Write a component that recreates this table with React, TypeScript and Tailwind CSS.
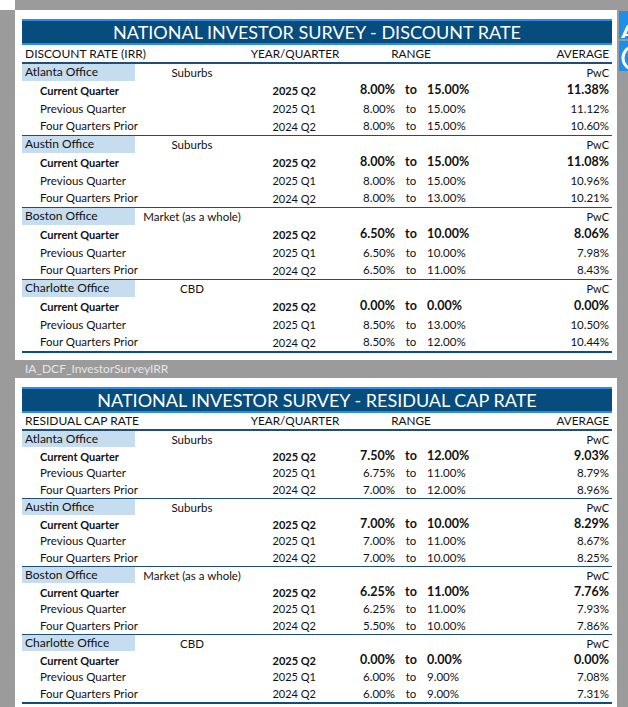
type Row = { label: string; year: string; lo: string; hi: string; avg: string; bold?: boolean };
type Group = { office: string; sub: string; rows: Row[] };

const mk = (vals: string[][]): Row[] => [
  { label: "Current Quarter", year: "2025 Q2", lo: vals[0][0], hi: vals[0][1], avg: vals[0][2], bold: true },
  { label: "Previous Quarter", year: "2025 Q1", lo: vals[1][0], hi: vals[1][1], avg: vals[1][2] },
  { label: "Four Quarters Prior", year: "2024 Q2", lo: vals[2][0], hi: vals[2][1], avg: vals[2][2] },
];

const discount: Group[] = [
  { office: "Atlanta Office", sub: "Suburbs", rows: mk([["8.00%", "15.00%", "11.38%"], ["8.00%", "15.00%", "11.12%"], ["8.00%", "15.00%", "10.60%"]]) },
  { office: "Austin Office", sub: "Suburbs", rows: mk([["8.00%", "15.00%", "11.08%"], ["8.00%", "15.00%", "10.96%"], ["8.00%", "13.00%", "10.21%"]]) },
  { office: "Boston Office", sub: "Market (as a whole)", rows: mk([["6.50%", "10.00%", "8.06%"], ["6.50%", "10.00%", "7.98%"], ["6.50%", "11.00%", "8.43%"]]) },
  { office: "Charlotte Office", sub: "CBD", rows: mk([["0.00%", "0.00%", "0.00%"], ["8.50%", "13.00%", "10.50%"], ["8.50%", "12.00%", "10.44%"]]) },
];

const residual: Group[] = [
  { office: "Atlanta Office", sub: "Suburbs", rows: mk([["7.50%", "12.00%", "9.03%"], ["6.75%", "11.00%", "8.79%"], ["7.00%", "12.00%", "8.96%"]]) },
  { office: "Austin Office", sub: "Suburbs", rows: mk([["7.00%", "10.00%", "8.29%"], ["7.00%", "11.00%", "8.67%"], ["7.00%", "10.00%", "8.25%"]]) },
  { office: "Boston Office", sub: "Market (as a whole)", rows: mk([["6.25%", "11.00%", "7.76%"], ["6.25%", "11.00%", "7.93%"], ["5.50%", "10.00%", "7.86%"]]) },
  { office: "Charlotte Office", sub: "CBD", rows: mk([["0.00%", "0.00%", "0.00%"], ["6.00%", "9.00%", "7.08%"], ["6.00%", "9.00%", "7.31%"]]) },
];

// columns: label | sub | year | low | to | high | average | pad
const grid = "grid grid-cols-[130px_80px_84px_79px_32px_75px_107px_3px] items-center flex-1 min-h-0 leading-none";

function OfficeRow({ g }: { g: Group }) {
  return (
    <div className={grid}>
      <div className="self-stretch mb-[1px] w-[113px] bg-[#c6dcef] pl-[3px] flex items-center text-[12px]">{g.office}</div>
      <div className="flex justify-center whitespace-nowrap text-[11.5px]">{g.sub}</div>
      <div />
      <div />
      <div />
      <div />
      <div className="text-right text-[11px]">PwC</div>
    </div>
  );
}

function DataRow({ r }: { r: Row }) {
  const num = r.bold ? "font-bold text-[12.5px]" : "text-[11.5px]";
  return (
    <div className={grid}>
      <div className={`pl-[18px] whitespace-nowrap ${r.bold ? "font-bold text-[11px]" : "text-[11.5px]"}`}>{r.label}</div>
      <div />
      <div className={`text-right text-[11px] ${r.bold ? "font-bold" : ""}`}>{r.year}</div>
      <div className={`text-right ${num}`}>{r.lo}</div>
      <div className={`text-center ${num}`}>to</div>
      <div className={num}>{r.hi}</div>
      <div className={`text-right ${num}`}>{r.avg}</div>
    </div>
  );
}

function Panel({
  title,
  label,
  groups,
  headH,
  groupH,
  lastH,
  outer,
}: {
  title: string;
  label: string;
  groups: Group[];
  headH: string;
  groupH: string;
  lastH: string;
  outer: string;
}) {
  return (
    <div className={`bg-white pl-[7px] pr-[5px] pt-[9px] ${outer}`}>
      <div className="h-[26px] bg-[#064c7d] border-y-2 border-[#2b8de3] flex items-center justify-center text-white text-[18px] leading-none">
        {title}
      </div>
      <div className={`${headH} border-b-2 border-[#1f4e79] flex items-center text-[11.75px] leading-none`}>
        <div className="w-[211px] pl-[3px] text-[12px] whitespace-nowrap">{label}</div>
        <div className="w-[124px] text-center">YEAR/QUARTER</div>
        <div className="w-[108px] text-center">RANGE</div>
        <div className="w-[144px] text-right">AVERAGE</div>
      </div>
      {groups.map((g, i) => (
        <div
          key={g.office}
          className={`flex flex-col ${i === groups.length - 1 ? `${lastH} border-b-2 border-[#0b4f80]` : `${groupH} border-b border-[#1f4e79]`}`}
        >
          <OfficeRow g={g} />
          {g.rows.map((r) => (
            <DataRow key={r.label} r={r} />
          ))}
        </div>
      ))}
    </div>
  );
}

function SideButtons() {
  return (
    <svg width="9" height="60" viewBox="0 0 9 60" className="block">
      <rect x="0" y="0" width="9" height="28" fill="#1e8fe8" />
      <rect x="0" y="30" width="9" height="30" fill="#1e8fe8" />
      <polygon points="2,27 8,14 9,14 9,19 5.5,27" fill="#fff" />
      <rect x="6" y="23" width="3" height="2" fill="#fff" />
      <path d="M 14 36 A 10 11 0 0 0 14 58" fill="none" stroke="#fff" strokeWidth="3" />
    </svg>
  );
}

export default function App() {
  return (
    <div className="w-[628px] h-[707px] bg-[#9b9b9b] flex overflow-hidden font-['Lato',sans-serif] text-[#111]">
      <div className="w-[15px] flex flex-col">
        <div className="h-[10px] bg-white" />
      </div>
      <div className="w-[602px] flex flex-col pt-[10px]">
        <Panel
          title="NATIONAL INVESTOR SURVEY - DISCOUNT RATE"
          label="DISCOUNT RATE (IRR)"
          groups={discount}
          headH="h-[19px]"
          groupH="h-[72px]"
          lastH="h-[73px]"
          outer="h-[350px]"
        />
        <div className="h-[18px] pl-[10px] flex items-center text-[12px] text-[#e6e6e6]">IA_DCF_InvestorSurveyIRR</div>
        <Panel
          title="NATIONAL INVESTOR SURVEY - RESIDUAL CAP RATE"
          label="RESIDUAL CAP RATE"
          groups={residual}
          headH="h-[18px]"
          groupH="h-[68px]"
          lastH="h-[69px]"
          outer="flex-1"
        />
      </div>
      <div className="w-[11px] pt-[11px] pl-[2px]">
        <SideButtons />
      </div>
    </div>
  );
}
